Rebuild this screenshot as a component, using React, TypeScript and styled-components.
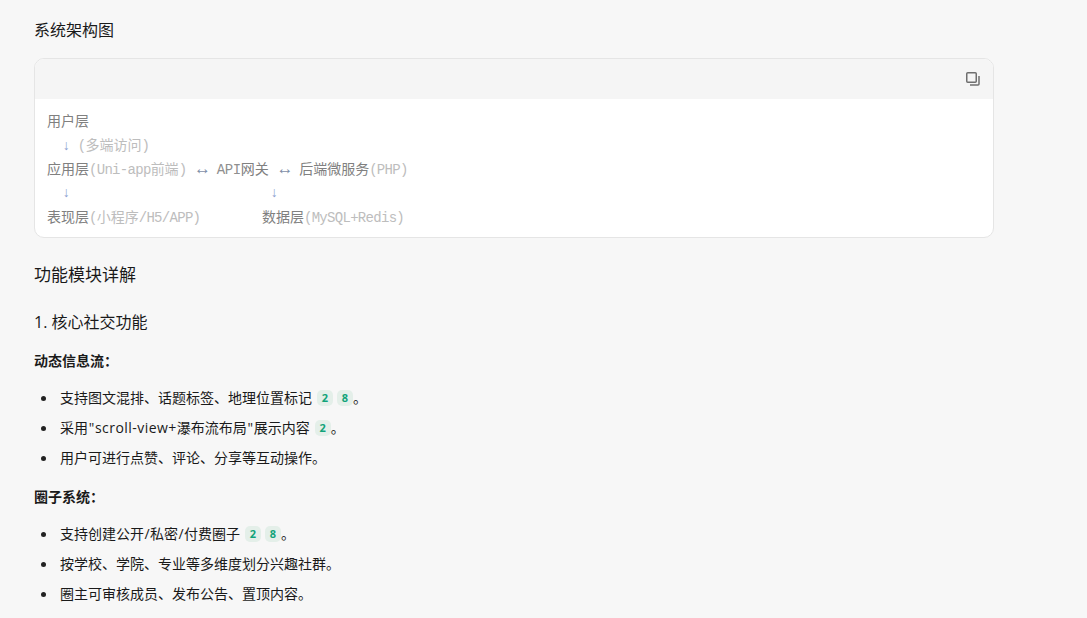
import React from 'react';
import styled, { createGlobalStyle } from 'styled-components';

const GlobalStyle = createGlobalStyle`
    html, body {
        margin: 0;
        padding: 0;
        height: 100%;
        overflow: hidden;
        background: #f7f7f7;
    }
    body {
        font-family: 'Open Sans', 'Noto Sans CJK SC', sans-serif;
        color: #1a1a1a;
    }
`;

const Cites: React.FC<{ refs: number[] }> = ({ refs }) => (
    <CiteGroup>
        {refs.map((n) => (
            <Badge key={n}>{n}</Badge>
        ))}
    </CiteGroup>
);

const CopyIcon: React.FC = () => (
    <svg width="16" height="16" viewBox="0 0 16 16" fill="none" stroke="#6f6f6f">
        <rect x="1.75" y="1.75" width="9.5" height="9.5" rx="1" strokeWidth="1.5" />
        <path d="M14 5v8a1 1 0 0 1-1 1H5" strokeWidth="1.5" />
    </svg>
);

const App: React.FC = () => {
    return (
        <Page>
            <GlobalStyle />
            <TopHeading>系统架构图</TopHeading>
            <CodeBlock>
                <CodeBar>
                    <CopyIcon />
                </CodeBar>
                <CodeBody>
                    <Line><Cjk>用户层</Cjk></Line>
                    <Line>{'  '}<Arrow>↓</Arrow> <Dim>(<Cjk>多端访问</Cjk>)</Dim></Line>
                    <Line><Cjk>应用层</Cjk><Dim>(Uni-app<Cjk>前端</Cjk>)</Dim> <WideArrow>↔</WideArrow> <Mid>API</Mid><Cjk>网关</Cjk> <WideArrow>↔</WideArrow> <Cjk>后端微服务</Cjk><Dim>(PHP)</Dim></Line>
                    <Line>{'  '}<Arrow>↓</Arrow>{'                          '}<Arrow>↓</Arrow></Line>
                    <Line><Cjk>表现层</Cjk><Dim>(<Cjk>小程序</Cjk>/H5/APP)</Dim>{'        '}<Cjk>数据层</Cjk><Dim>(MySQL+Redis)</Dim></Line>
                </CodeBody>
            </CodeBlock>
            <SectionHeading>功能模块详解</SectionHeading>
            <SubHeading>1. 核心社交功能</SubHeading>
            <Lead>动态信息流：</Lead>
            <BulletList>
                <li>支持图文混排、话题标签、地理位置标记<Cites refs={[2, 8]} />。</li>
                <li>采用<Mark $width={7}>"</Mark><Latin>scroll-view+</Latin>瀑布流布局<Mark $width={7}>"</Mark>展示内容<Cites refs={[2]} />。</li>
                <li>用户可进行点赞、评论、分享等互动操作。</li>
            </BulletList>
            <Lead>圈子系统：</Lead>
            <BulletList>
                <li>支持创建公开<Mark $width={6}>/</Mark>私密<Mark $width={6}>/</Mark>付费圈子<Cites refs={[2, 8]} />。</li>
                <li>按学校、学院、专业等多维度划分兴趣社群。</li>
                <li>圈主可审核成员、发布公告、置顶内容。</li>
            </BulletList>
        </Page>
    );
};

export default App;

const Page = styled.div`
    width: 960px;
    padding: 18px 0 0 34px;
`;

const TopHeading = styled.h3`
    margin: 0 0 15px;
    font-size: 16px;
    font-weight: 400;
    line-height: 25px;
`;

const CodeBlock = styled.div`
    border: 1px solid #e5e5e5;
    border-radius: 10px;
    overflow: hidden;
    background: #fff;
`;

const CodeBar = styled.div`
    height: 40px;
    background: #f5f5f5;
    display: flex;
    align-items: center;
    justify-content: flex-end;
    padding-right: 12px;
`;

const CodeBody = styled.pre`
    margin: 0;
    padding: 9px 12px 9px;
    font-family: 'Liberation Mono', 'Noto Sans CJK SC', monospace;
    font-size: 14px;
    letter-spacing: -0.7px;
    line-height: 24px;
    color: #808080;
`;

const Line = styled.div`
    height: 24px;
`;

const Cjk = styled.span`
    font-family: 'Noto Sans CJK SC', sans-serif;
    letter-spacing: 0;
`;

const Dim = styled.span`
    color: #bdbdbd;
`;

const Mid = styled.span`
    color: #8f8f8f;
    letter-spacing: -0.4px;
`;

const Arrow = styled.span`
    display: inline-block;
    width: 7.7px;
    font-family: 'Liberation Sans', sans-serif;
    font-size: 14px;
    letter-spacing: 0;
    text-align: center;
    color: #8c9fd0;
`;

const WideArrow = styled.span`
    display: inline-block;
    width: 15px;
    font-family: 'Liberation Sans', sans-serif;
    font-size: 17px;
    line-height: 20px;
    letter-spacing: 0;
    text-align: center;
    color: #7f8fa8;
`;

const SectionHeading = styled.h2`
    margin: 24px 0 0;
    font-size: 17px;
    font-weight: 400;
    line-height: 26px;
`;

const SubHeading = styled.h3`
    margin: 21px 0 0;
    font-size: 16px;
    font-weight: 400;
    line-height: 26px;
`;

const Lead = styled.p`
    margin: 14px 0 0;
    font-size: 14px;
    font-weight: 700;
    line-height: 24px;
`;

const BulletList = styled.ul`
    margin: 13px 0 15px;
    padding: 0;
    list-style: none;
    font-size: 14px;
    line-height: 24px;
    li {
        position: relative;
        padding-left: 26px;
        margin-bottom: 6px;
    }
    li::before {
        content: '';
        position: absolute;
        left: 7px;
        top: 10px;
        width: 5px;
        height: 5px;
        border-radius: 50%;
        background: #222;
    }
`;

const Mark = styled.span<{ $width: number }>`
    display: inline-block;
    width: ${(props) => props.$width}px;
    text-align: center;
`;

const Latin = styled.span`
    letter-spacing: 0.45px;
`;

const CiteGroup = styled.span`
    display: inline-flex;
    gap: 4px;
    margin-left: 5px;
    vertical-align: 1px;
`;

const Badge = styled.span`
    width: 16px;
    height: 16px;
    border-radius: 5px;
    background: #e4efe9;
    color: #12a37a;
    font-family: 'Open Sans', sans-serif;
    font-size: 11px;
    font-weight: 700;
    line-height: 16px;
    text-align: center;
`;
